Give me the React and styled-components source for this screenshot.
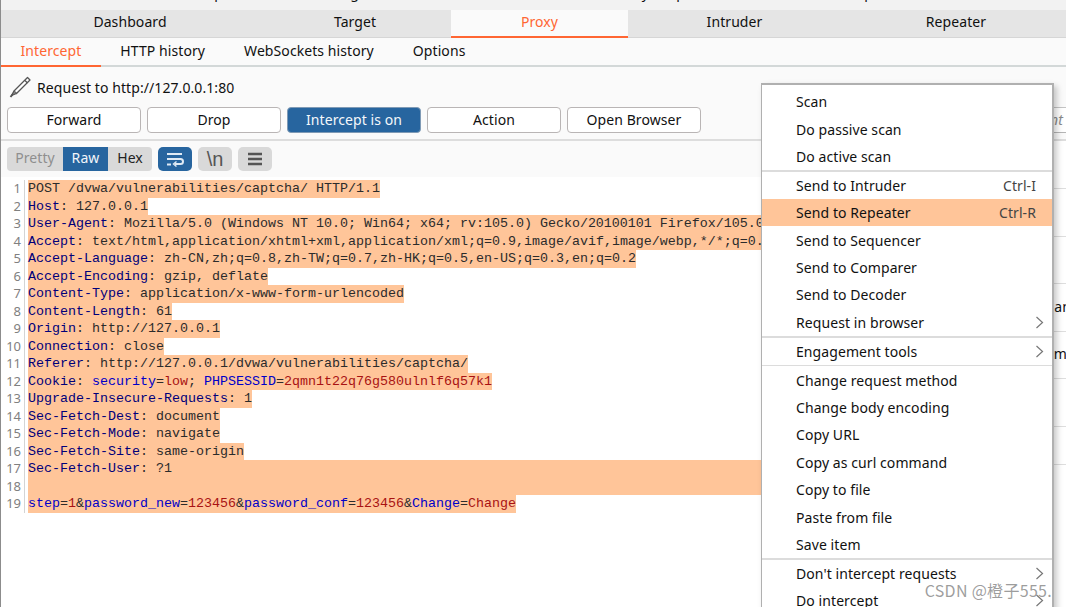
import React from 'react';
import styled, { createGlobalStyle } from 'styled-components';

const GlobalStyle = createGlobalStyle`
  html, body {
    margin: 0;
    padding: 0;
    background: #fafafa;
  }
`;

const Page = styled.div`
  position: relative;
  box-sizing: border-box;
  width: 1066px;
  height: 607px;
  overflow: hidden;
  border-left: 1px solid #8c8c8c;
  background: #fafafa;
  color: #111;
  font-family: "Noto Sans", "Liberation Sans", sans-serif;
  font-size: 14px;
  letter-spacing: 0.08px;
`;

const TitleStrip = styled.div`
  height: 10px;
  background: #f2f2f2;
`;

const TitleClip = styled.div`
  display: flex;
  align-items: flex-end;
  height: 3px;
  overflow: hidden;
  line-height: 20px;
`;

const TitleBit = styled.span`
  flex: none;
  width: ${p => p.$w}px;
  text-align: right;
`;

const MainTabs = styled.div`
  display: grid;
  grid-template-columns: 258px 192px 177px 213px 230px;
  height: 27px;
  background: #e5e5e5;
  border-bottom: 1px solid #d6d6d6;
`;

const MainTab = styled.div`
  box-sizing: border-box;
  display: flex;
  align-items: center;
  justify-content: center;
  padding-bottom: 3px;
  color: ${p => (p.$active ? '#ff6633' : '#111')};
  background: ${p => (p.$active ? '#fafafa' : 'transparent')};
  border-bottom: 2px solid ${p => (p.$active ? '#ff6633' : 'transparent')};
  margin-bottom: -1px;
`;

const SubTabs = styled.div`
  display: flex;
  height: 27px;
  border-bottom: 2px solid #d3d8d8;
`;

const SubTab = styled.div`
  display: flex;
  align-items: center;
  padding: 0 19.5px 3px;
  height: 29px;
  box-sizing: border-box;
  color: ${p => (p.$active ? '#ff6633' : '#111')};
  border-bottom: 2px solid ${p => (p.$active ? '#ff6633' : 'transparent')};
`;

const RequestRow = styled.div`
  display: flex;
  align-items: center;
  gap: 5px;
  height: 40px;
  padding: 0 7px;
`;

const ButtonRow = styled.div`
  display: flex;
  gap: 6px;
  height: 26px;
  padding-left: 6px;
  padding-bottom: 6px;
  border-bottom: 2px solid #dddddd;
`;

const Button = styled.div`
  box-sizing: border-box;
  flex: none;
  width: 134px;
  display: flex;
  align-items: center;
  justify-content: center;
  padding-bottom: 2px;
  border: 1px solid ${p => (p.$on ? '#7f9ab5' : '#b9b5b5')};
  border-radius: 4px;
  background: ${p => (p.$on ? '#27659f' : '#ffffff')};
  color: ${p => (p.$on ? '#f4f8fb' : '#111')};
`;

const CommentBox = styled.div`
  box-sizing: border-box;
  margin-left: auto;
  width: 300px;
  display: flex;
  align-items: center;
  justify-content: flex-end;
  padding: 0 3px 2px 0;
  border-top: 1px solid #c4c4c4;
  border-bottom: 1px solid #b5b5b5;
  background: #fff;
  color: #8a8a8a;
  font-style: italic;
`;

const Body = styled.div`
  display: flex;
  height: 467px;
`;

const MessagePane = styled.div`
  flex: none;
  width: 760px;
  display: flex;
  flex-direction: column;
`;

const MessageBar = styled.div`
  flex: none;
  display: flex;
  align-items: center;
  gap: 6px;
  height: 36px;
  padding: 0 0 0 6px;
  box-sizing: border-box;
`;

const Segments = styled.div`
  display: flex;
  height: 24px;
  border-radius: 4px;
  overflow: hidden;
  background: #d9d9d9;
`;

const Segment = styled.div`
  display: flex;
  align-items: center;
  justify-content: center;
  padding-bottom: 3px;
  box-sizing: border-box;
  width: ${p => p.$w}px;
  color: ${p => (p.$on ? '#f2f6fa' : p.$off ? '#8f8f8f' : '#222')};
  background: ${p => (p.$on ? '#27659f' : 'transparent')};
`;

const IconButton = styled.div`
  flex: none;
  width: 34px;
  height: 24px;
  display: flex;
  align-items: center;
  justify-content: center;
  border-radius: 5px;
  background: ${p => (p.$on ? '#27659f' : '#d9d9d9')};
  color: ${p => (p.$on ? '#dfeaf4' : '#555')};
`;

const NewlineMark = styled.span`
  font-family: "Liberation Sans", sans-serif;
  font-size: 20px;
  line-height: 24px;
  letter-spacing: 0;
  color: #555;
`;

const Editor = styled.div`
  flex: 1;
  padding-top: 3.25px;
  background: #fff;
  overflow: hidden;
  font-family: "Liberation Mono", "Courier New", monospace;
  font-size: 13.33px;
  letter-spacing: 0;
`;

const CodeRow = styled.div`
  display: flex;
  height: 17.5px;
  line-height: 17.5px;
  white-space: pre;
`;

const LineNo = styled.div`
  flex: none;
  box-sizing: border-box;
  width: 24px;
  padding-right: 3px;
  text-align: right;
  border-right: 1px solid #d4d4d4;
  color: #808080;
  font-family: "Noto Sans", sans-serif;
  font-size: 13px;
`;

const CodeCell = styled.div`
  flex: 1;
  min-width: 0;
  padding-left: 3px;
`;

const Selected = styled.span`
  display: ${p => (p.$full ? 'block' : 'inline-block')};
  height: 17.5px;
  background: #ffc599;
`;

const colours = { k: '#00007a', t: '#2b2b2b', n: '#0000c8', v: '#a81212' };

const Token = styled.span`
  color: ${p => colours[p.$type]};
`;

const SidePanel = styled.div`
  flex: 1;
  background: #fff;
`;

const SideRow = styled.div`
  box-sizing: border-box;
  display: flex;
  align-items: center;
  justify-content: flex-end;
  height: ${p => p.$h}px;
  padding-bottom: 3px;
  border-bottom: 1px solid #dedede;
`;

const SideText = styled.span`
  margin-right: ${p => p.$cut}px;
`;

const Menu = styled.div`
  position: absolute;
  left: 760px;
  top: 83px;
  box-sizing: border-box;
  width: 293px;
  padding-top: 3px;
  background: #fff;
  border-style: solid;
  border-color: #b0b0b0;
  border-width: 2px 2px 0 1px;
  box-shadow: 3px 3px 6px rgba(0, 0, 0, 0.22);
`;

const MenuItem = styled.div`
  display: flex;
  align-items: center;
  height: 27.4px;
  padding: 0 16px 0 34px;
  background: ${p => (p.$hot ? '#ffc599' : 'transparent')};
`;

const MenuLabel = styled.span`
  flex: 1;
`;

const Shortcut = styled.span`
  color: #444;
`;

const MenuSeparator = styled.div`
  height: 1.5px;
  background: #dcdcdc;
`;

const SubArrow = styled.span`
  display: flex;
  margin-right: -8px;
`;

const Watermark = styled.div`
  position: absolute;
  right: 14px;
  bottom: 9px;
  color: rgba(130, 130, 130, 0.78);
  font-family: "Noto Sans CJK SC", "Noto Sans", sans-serif;
  font-size: 16px;
  line-height: 16px;
  letter-spacing: 0.3px;
  white-space: nowrap;
`;

const PencilIcon = () => (
  <svg width="24" height="24" viewBox="0 0 24 24" fill="none" stroke="#555" strokeWidth="1.3" strokeLinejoin="round">
    <path d="M19.5 2.5 22 5 8.5 18.5 6 16Z" fill="#fff" />
    <path d="M6 16 3.5 20.5 8.5 18.5" fill="#888" />
    <path d="M2.5 22 4.5 19.5" strokeWidth="2" />
    <path d="M17 5.5 19.5 8" />
  </svg>
);

const WrapIcon = () => (
  <svg width="20" height="15" viewBox="0 0 20 15" fill="none" stroke="currentColor">
    <path d="M2 2h15" strokeWidth="2" />
    <path d="M2 7h13.5a2.3 2.3 0 0 1 0 5H10" strokeWidth="2" />
    <path d="M2 12.5h4" strokeWidth="2" />
    <path d="M11.5 9.5 8.5 12l3 2.5" strokeWidth="1.4" />
  </svg>
);

const MenuLinesIcon = () => (
  <svg width="16" height="14" viewBox="0 0 16 14" fill="none" stroke="#555" strokeWidth="2.4">
    <path d="M1 2h14M1 7h14M1 12h14" />
  </svg>
);

const Chevron = () => (
  <svg width="9" height="13" viewBox="0 0 9 13" fill="none" stroke="#777" strokeWidth="1.2">
    <path d="M1.5 1 7.5 6.5 1.5 12" />
  </svg>
);

const lines = [
  { tokens: [['t', 'POST /dvwa/vulnerabilities/captcha/ HTTP/1.1']] },
  { tokens: [['k', 'Host'], ['t', ': 127.0.0.1']] },
  { tokens: [['k', 'User-Agent'], ['t', ': Mozilla/5.0 (Windows NT 10.0; Win64; x64; rv:105.0) Gecko/20100101 Firefox/105.0']], full: true },
  { tokens: [['k', 'Accept'], ['t', ': text/html,application/xhtml+xml,application/xml;q=0.9,image/avif,image/webp,*/*;q=0.8']], full: true },
  { tokens: [['k', 'Accept-Language'], ['t', ': zh-CN,zh;q=0.8,zh-TW;q=0.7,zh-HK;q=0.5,en-US;q=0.3,en;q=0.2']] },
  { tokens: [['k', 'Accept-Encoding'], ['t', ': gzip, deflate']] },
  { tokens: [['k', 'Content-Type'], ['t', ': application/x-www-form-urlencoded']] },
  { tokens: [['k', 'Content-Length'], ['t', ': 61']] },
  { tokens: [['k', 'Origin'], ['t', ': http://127.0.0.1']] },
  { tokens: [['k', 'Connection'], ['t', ': close']] },
  { tokens: [['k', 'Referer'], ['t', ': http://127.0.0.1/dvwa/vulnerabilities/captcha/']] },
  {
    tokens: [
      ['k', 'Cookie'], ['t', ': '], ['n', 'security'], ['t', '='], ['v', 'low'], ['t', '; '],
      ['n', 'PHPSESSID'], ['t', '='], ['v', '2qmn1t22q76g580ulnlf6q57k1'],
    ],
  },
  { tokens: [['k', 'Upgrade-Insecure-Requests'], ['t', ': 1']] },
  { tokens: [['k', 'Sec-Fetch-Dest'], ['t', ': document']] },
  { tokens: [['k', 'Sec-Fetch-Mode'], ['t', ': navigate']] },
  { tokens: [['k', 'Sec-Fetch-Site'], ['t', ': same-origin']] },
  { tokens: [['k', 'Sec-Fetch-User'], ['t', ': ?1']], full: true },
  { tokens: [['t', ' ']], full: true },
  {
    tokens: [
      ['n', 'step'], ['t', '='], ['v', '1'], ['t', '&'], ['n', 'password_new'], ['t', '='], ['v', '123456'],
      ['t', '&'], ['n', 'password_conf'], ['t', '='], ['v', '123456'], ['t', '&'], ['n', 'Change'], ['t', '='], ['v', 'Change'],
    ],
  },
];

const menuGroups = [
  [{ label: 'Scan' }, { label: 'Do passive scan' }, { label: 'Do active scan' }],
  [
    { label: 'Send to Intruder', keys: 'Ctrl-I' },
    { label: 'Send to Repeater', keys: 'Ctrl-R', hot: true },
    { label: 'Send to Sequencer' },
    { label: 'Send to Comparer' },
    { label: 'Send to Decoder' },
    { label: 'Request in browser', sub: true },
  ],
  [{ label: 'Engagement tools', sub: true }],
  [
    { label: 'Change request method' },
    { label: 'Change body encoding' },
    { label: 'Copy URL' },
    { label: 'Copy as curl command' },
    { label: 'Copy to file' },
    { label: 'Paste from file' },
    { label: 'Save item' },
  ],
  [{ label: "Don't intercept requests", sub: true }, { label: 'Do intercept', sub: true }],
];

const sideRows = [
  { h: 48 }, { h: 48 }, { h: 47 }, { h: 48, text: 'an', cut: -5 }, { h: 47, text: 'm', cut: -1 }, { h: 48 }, { h: 38 },
];

export default function App() {
  return (
    <Page>
      <GlobalStyle />
      <TitleStrip>
        <TitleClip>
          <TitleBit $w={222}>p</TitleBit>
          <TitleBit $w={136}>g</TitleBit>
          <TitleBit $w={290}>y</TitleBit>
          <TitleBit $w={36}>p</TitleBit>
          <TitleBit $w={188}>p</TitleBit>
        </TitleClip>
      </TitleStrip>
      <MainTabs>
        <MainTab>Dashboard</MainTab>
        <MainTab>Target</MainTab>
        <MainTab $active>Proxy</MainTab>
        <MainTab>Intruder</MainTab>
        <MainTab>Repeater</MainTab>
      </MainTabs>
      <SubTabs>
        <SubTab $active>Intercept</SubTab>
        <SubTab>HTTP history</SubTab>
        <SubTab>WebSockets history</SubTab>
        <SubTab>Options</SubTab>
      </SubTabs>
      <RequestRow>
        <PencilIcon />
        Request to http://127.0.0.1:80
      </RequestRow>
      <ButtonRow>
        <Button>Forward</Button>
        <Button>Drop</Button>
        <Button $on>Intercept is on</Button>
        <Button>Action</Button>
        <Button>Open Browser</Button>
        <CommentBox>Comment</CommentBox>
      </ButtonRow>
      <Body>
        <MessagePane>
          <MessageBar>
            <Segments>
              <Segment $w={56} $off>Pretty</Segment>
              <Segment $w={45} $on>Raw</Segment>
              <Segment $w={44}>Hex</Segment>
            </Segments>
            <IconButton $on><WrapIcon /></IconButton>
            <IconButton><NewlineMark>\n</NewlineMark></IconButton>
            <IconButton><MenuLinesIcon /></IconButton>
          </MessageBar>
          <Editor>
            {lines.map((line, i) => (
              <CodeRow key={i}>
                <LineNo>{i + 1}</LineNo>
                <CodeCell>
                  <Selected $full={line.full}>
                    {line.tokens.map(([type, text], j) => (
                      <Token key={j} $type={type}>{text}</Token>
                    ))}
                  </Selected>
                </CodeCell>
              </CodeRow>
            ))}
          </Editor>
        </MessagePane>
        <SidePanel>
          {sideRows.map((row, i) => (
            <SideRow key={i} $h={row.h}>
              {row.text && <SideText $cut={row.cut}>{row.text}</SideText>}
            </SideRow>
          ))}
        </SidePanel>
      </Body>
      <Menu>
        {menuGroups.map((group, i) => (
          <React.Fragment key={i}>
            {i > 0 && <MenuSeparator />}
            {group.map(item => (
              <MenuItem key={item.label} $hot={item.hot}>
                <MenuLabel>{item.label}</MenuLabel>
                {item.keys && <Shortcut>{item.keys}</Shortcut>}
                {item.sub && <SubArrow><Chevron /></SubArrow>}
              </MenuItem>
            ))}
          </React.Fragment>
        ))}
      </Menu>
      <Watermark>CSDN @橙子555.</Watermark>
    </Page>
  );
}
